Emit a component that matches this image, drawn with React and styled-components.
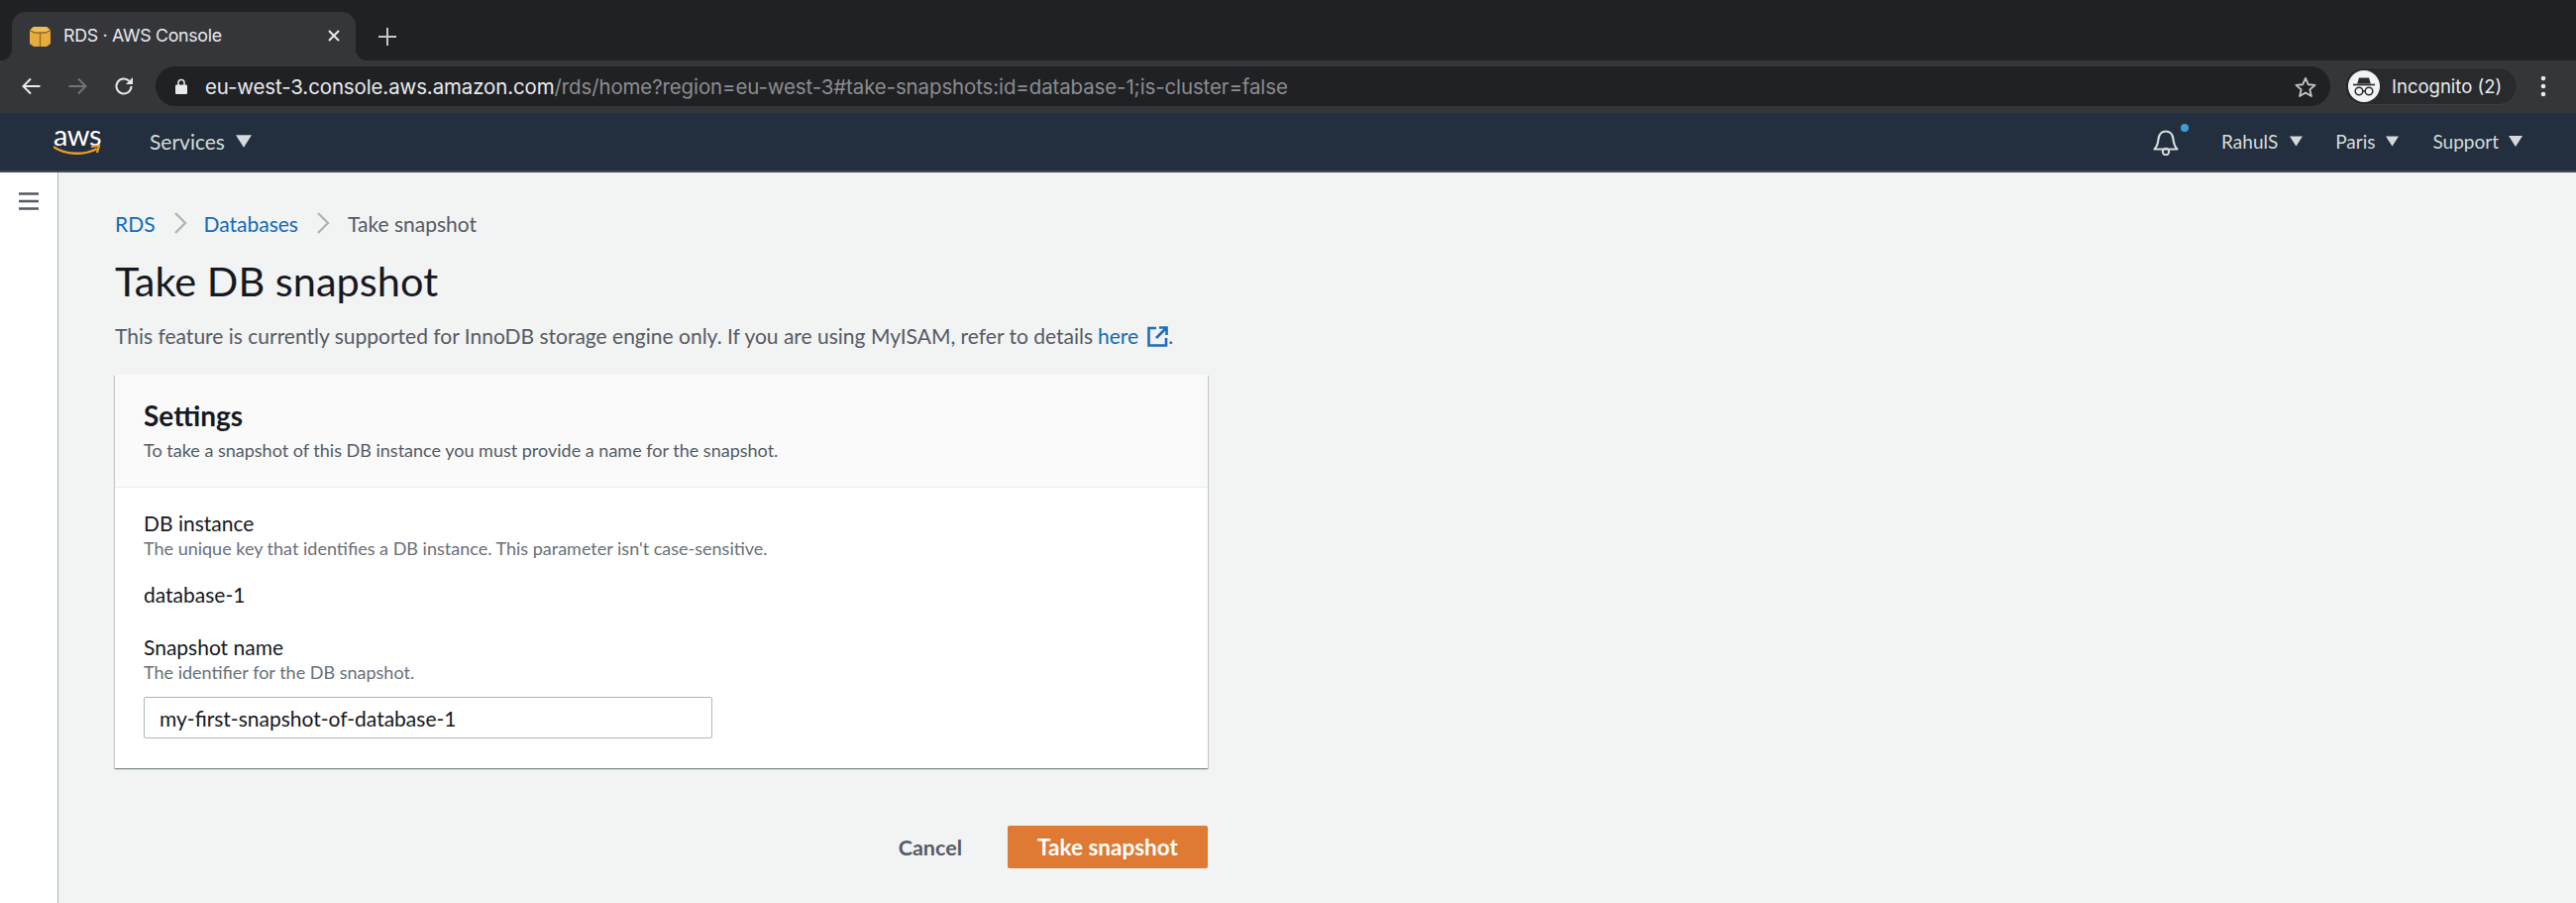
import React from "react";
import styled, { createGlobalStyle } from "styled-components";

const Global = createGlobalStyle`
  html, body { margin: 0; padding: 0; height: 100%; overflow: hidden; background: #f2f3f3; }
  #root { height: 100%; }
  * { box-sizing: border-box; }
`;
const UI = `"Inter", "Roboto", sans-serif`;
const EMBER = `"Lato", "Noto Sans", sans-serif`;

const Page = styled.div`display: flex; flex-direction: column; height: 911px; width: 2600px; overflow: hidden;`;

const TabStrip = styled.div`display: flex; align-items: flex-end; height: 61px; background: #202124; padding-left: 12px;`;
const Tab = styled.div`
  position: relative; display: flex; align-items: center; width: 347px; height: 49px; padding: 0 14px 0 18px;
  background: #35363a; border-radius: 14px 14px 0 0; color: #e8eaed; font: 400 17.800px ${UI}; letter-spacing: -0.3px;
  &::before, &::after { content: ""; position: absolute; bottom: 0; width: 12px; height: 12px; }
  &::before { left: -12px; background: radial-gradient(circle at 0 0, transparent 12px, #35363a 12.5px); }
  &::after { right: -12px; background: radial-gradient(circle at 100% 0, transparent 12px, #35363a 12.5px); }
`;
const TabTitle = styled.span`margin-left: 13px; flex: 1; padding-bottom: 2px;`;
const TabClose = styled.svg`margin-right: 1px; margin-bottom: 2px; display: block;`;
const NewTab = styled.svg`margin: 0 0 15px 23px; display: block;`;

const Toolbar = styled.div`display: flex; align-items: center; height: 53px; background: #35363a; padding: 0 0 1px 22px;`;
const NavIcon = styled.svg`display: block; flex: none; margin-right: ${p => p.$gap}px;`;
const Omnibox = styled.div`
  display: flex; align-items: center; width: 2195px; height: 40px; padding: 0 14px 0 20px;
  background: #202124; border-radius: 20px; font: 400 20.450px ${UI}; letter-spacing: -0.1px; white-space: nowrap;
`;
const UrlHost = styled.span`color: #e8eaed; margin-left: 18px;`;
const UrlPath = styled.span`color: #8b8d90; flex: 1;`;
const Incognito = styled.div`
  display: flex; align-items: center; width: 175px; height: 38px; margin-left: 14px; padding-left: 3px;
  background: #292a2d; border: 1px solid #3c3d41; border-radius: 19px; color: #e8eaed; font: 400 18.500px ${UI};
`;
const IncognitoBadge = styled.div`
  display: flex; align-items: center; justify-content: center; width: 32px; height: 32px; border-radius: 50%;
  background: #f1f3f4; margin-right: 12px; flex: none;
`;
const Kebab = styled.svg`display: block; margin-left: 23px;`;

const AwsNav = styled.div`
  display: flex; align-items: center; height: 60px; padding: 0 54px; background: #232f3e; border-bottom: 2px solid #3f4b5a;
  color: #d5dbdb; font: 400 19px ${EMBER};
`;
const AwsLogo = styled.div`position: relative; width: 47px; height: 34px; margin-right: 50px; flex: none;`;
const AwsWord = styled.span`position: absolute; left: 0; top: -7px; color: #fff; font: 400 29px "Lato", sans-serif; letter-spacing: -0.5px; line-height: 34px;`;
const AwsSmile = styled.svg`position: absolute; left: 0; top: 20px; display: block;`;
const NavSpacer = styled.div`flex: 1;`;
const NavItem = styled.div`display: flex; align-items: center; margin-left: ${p => p.$left}px; font-size: ${p => p.$size}px; padding-bottom: 2px;`;
const Caret = styled.svg`display: block; margin-left: ${p => p.$gap}px;`;
const BellWrap = styled.div`position: relative; width: 26px; height: 28px; margin-right: 43px;`;
const BellDot = styled.span`position: absolute; right: -10px; top: -4px; width: 8px; height: 8px; border-radius: 50%; background: #3c9fd1;`;

const Body = styled.div`display: flex; flex: 1; min-height: 0;`;
const Sidebar = styled.aside`width: 59px; background: #fff; border-right: 1px solid #aab7b8; padding: 20px 0 0 19px; flex: none;`;
const Main = styled.main`flex: 1; padding: 37px 0 0 57px; background: #f2f3f3;`;

const Crumbs = styled.nav`display: flex; align-items: center; height: 28px; font: 400 21px ${EMBER}; color: #545b64;`;
const CrumbLink = styled.a`color: #0f6cb9;`;
const CrumbSep = styled.svg`display: block; margin: 0 ${p => p.$r}px 0 ${p => p.$l}px;`;
const Title = styled.h1`margin: 19px 0 0; font: 400 41.500px/50px ${EMBER}; color: #16191f;`;
const Note = styled.p`margin: 17px 0 0; display: flex; align-items: center; font: 400 21px/28px ${EMBER}; color: #545b64; height: 28px;`;
const NoteLink = styled.a`color: #0f6cb9; margin-left: 5px;`;
const ExtIcon = styled.svg`display: block; margin-left: 9px;`;

const Card = styled.section`
  width: 1103px; margin-top: 25px; background: #fff; box-shadow: 0 1px 1px 0 rgba(0,28,36,.3), 1px 1px 1px 0 rgba(0,28,36,.15), -1px 1px 1px 0 rgba(0,28,36,.15);
`;
const CardHead = styled.header`height: 114px; padding: 24px 29px 0; background: #fafafa; border-bottom: 1px solid #eaeded;`;
const CardTitle = styled.h2`margin: 0; font: 700 28px/34px ${EMBER}; color: #16191f;`;
const Hint = styled.div`font: 400 18px/24px ${EMBER}; color: ${p => p.$muted ? "#687078" : "#545b64"};`;
const HeadHint = styled(Hint)`margin-top: 6px;`;
const CardBody = styled.div`padding: 22px 29px 0; height: 283px;`;
const Label = styled.div`font: 400 21px/27px ${EMBER}; color: #16191f;`;
const Value = styled.div`margin: 21px 0 25px; font: 400 21px/28px ${EMBER}; color: #16191f;`;
const Input = styled.input`
  display: block; width: 574px; height: 42px; margin-top: 13px; padding: 0 15px; background: #fff; border: 1px solid #aab7b8; border-radius: 2px;
  font: 400 21px ${EMBER}; color: #16191f; outline: none;
`;
const Actions = styled.div`display: flex; align-items: center; justify-content: flex-end; width: 1103px; margin-top: 58px;`;
const Ghost = styled.button`border: 0; background: none; padding: 0; font: 700 21.500px ${EMBER}; color: #545b64; margin-right: 46px;`;
const Primary = styled.button`width: 202px; height: 43px; border: 0; border-radius: 2px; background: #de7a33; color: #fff; font: 700 22.500px ${EMBER};`;

const Tri = ({ w, h, gap, color }) => (
  <Caret $gap={gap} width={w} height={h} viewBox="0 0 14 11"><path d="M0 0h14L7 11z" fill={color} /></Caret>
);
const Chevron = ({ l, r }) => (
  <CrumbSep $l={l} $r={r} width="14" height="22" viewBox="0 0 14 22"><path d="M2 1l10 10L2 21" fill="none" stroke="#aab7b8" strokeWidth="2.400" /></CrumbSep>
);

export default function App() {
  return (
    <Page>
      <Global />
      <TabStrip>
        <Tab>
          <svg width="21" height="21" viewBox="0 0 21 21" style={{ display: "block", flex: "none" }}>
            <path d="M4 1h13l4 3.500V18l-4 3H4l-4-3V4.500z" fill="#e8ac3b" />
            <path d="M4 1h13l4 3.500-5 2.500H5L0 4.500z" fill="#f0bd55" />
            <path d="M0 4.500L5 7h11l5-2.500M10.500 7v14" fill="none" stroke="#8f6a25" strokeWidth="1.300" />
          </svg>
          <TabTitle>RDS · AWS Console</TabTitle>
          <TabClose width="14" height="14" viewBox="0 0 14 14"><path d="M2 2l10 10M12 2L2 12" stroke="#e8eaed" strokeWidth="2" /></TabClose>
        </Tab>
        <NewTab width="18" height="18" viewBox="0 0 18 18"><path d="M9 0v18M0 9h18" stroke="#c4c7c9" strokeWidth="2" /></NewTab>
      </TabStrip>
      <Toolbar>
        <NavIcon $gap={28} width="19" height="18" viewBox="0 0 19 18"><path d="M18.500 9H2M9 1.500L1.500 9 9 16.500" fill="none" stroke="#e8eaed" strokeWidth="2" /></NavIcon>
        <NavIcon $gap={27} width="19" height="18" viewBox="0 0 19 18"><path d="M.5 9H17M10 1.500L17.500 9 10 16.500" fill="none" stroke="#737477" strokeWidth="2" /></NavIcon>
        <NavIcon $gap={22} width="20" height="20" viewBox="0 0 20 20"><path d="M17.500 10a7.500 7.500 0 1 1-2.200-5.300" fill="none" stroke="#e8eaed" strokeWidth="2" /><path d="M19 1v7h-7z" fill="#e8eaed" /></NavIcon>
        <Omnibox>
          <svg width="12" height="16" viewBox="0 0 12 16" style={{ display: "block", flex: "none" }}><path d="M3 7V4.500a3 3 0 0 1 6 0V7" fill="none" stroke="#e8eaed" strokeWidth="1.500" /><rect y="6.500" width="12" height="9.500" rx="1.200" fill="#e8eaed" /></svg>
          <UrlHost>eu-west-3.console.aws.amazon.com</UrlHost>
          <UrlPath>/rds/home?region=eu-west-3#take-snapshots:id=database-1;is-cluster=false</UrlPath>
          <svg width="22" height="21" viewBox="0 0 24 23" style={{ display: "block", flex: "none" }}><path d="M12 2l3 7 7.500.7-5.700 5 1.700 7.300-6.500-3.900L5.500 22l1.700-7.300-5.700-5L9 9z" fill="none" stroke="#c4c7c9" strokeWidth="2" strokeLinejoin="round" /></svg>
        </Omnibox>
        <Incognito>
          <IncognitoBadge>
            <svg width="24" height="21" viewBox="0 0 24 21">
              <path d="M7 1.500h10l1.800 6H5.200z" fill="#292a2d" />
              <path d="M1 8.500h22" stroke="#292a2d" strokeWidth="1.600" />
              <circle cx="7" cy="15" r="3.800" fill="none" stroke="#292a2d" strokeWidth="1.500" />
              <circle cx="17" cy="15" r="3.800" fill="none" stroke="#292a2d" strokeWidth="1.500" />
              <path d="M10.800 15h2.400" stroke="#292a2d" strokeWidth="1.500" />
            </svg>
          </IncognitoBadge>
          Incognito (2)
        </Incognito>
        <Kebab width="6" height="22" viewBox="0 0 6 22"><circle cx="3" cy="3" r="2.300" fill="#e8eaed" /><circle cx="3" cy="11" r="2.300" fill="#e8eaed" /><circle cx="3" cy="19" r="2.300" fill="#e8eaed" /></Kebab>
      </Toolbar>
      <AwsNav>
        <AwsLogo>
          <AwsWord>aws</AwsWord>
          <AwsSmile width="48" height="14" viewBox="0 0 48 14">
            <path d="M0.500 2.500C12 10 30 11 43 4.500" fill="none" stroke="#ec9b26" strokeWidth="2.400" strokeLinecap="round" />
            <path d="M38 2l8-1-2 7" fill="none" stroke="#ec9b26" strokeWidth="2.200" />
          </AwsSmile>
        </AwsLogo>
        <NavItem $left={0} $size={21}>Services<Tri w={16} h={13} gap={11} color="#d5dbdb" /></NavItem>
        <NavSpacer />
        <BellWrap>
          <svg width="26" height="28" viewBox="0 0 26 28" style={{ display: "block" }}>
            <path d="M1.500 21.500h23c-3-3-3.500-5.500-4-10-.5-5-3.500-8-7.500-8s-7 3-7.500 8c-.5 4.500-1 7-4 10z" fill="none" stroke="#d5dbdb" strokeWidth="2.200" strokeLinejoin="round" />
            <circle cx="13" cy="24" r="3.200" fill="none" stroke="#d5dbdb" strokeWidth="2" />
          </svg>
          <BellDot />
        </BellWrap>
        <NavItem $left={0} $size={19}>RahulS<Tri w={13} h={11} gap={12} color="#d5dbdb" /></NavItem>
        <NavItem $left={33} $size={19}>Paris<Tri w={13} h={11} gap={11} color="#d5dbdb" /></NavItem>
        <NavItem $left={34} $size={19}>Support<Tri w={14} h={11} gap={10} color="#d5dbdb" /></NavItem>
      </AwsNav>
      <Body>
        <Sidebar>
          <svg width="20" height="18" viewBox="0 0 20 18" style={{ display: "block" }}><path d="M0 1.500h20M0 9h20M0 16.500h20" stroke="#545b64" strokeWidth="2.600" /></svg>
        </Sidebar>
        <Main>
          <Crumbs>
            <CrumbLink>RDS</CrumbLink>
            <Chevron l={18} r={17} />
            <CrumbLink>Databases</CrumbLink>
            <Chevron l={18} r={18} />
            Take snapshot
          </Crumbs>
          <Title>Take DB snapshot</Title>
          <Note>
            This feature is currently supported for InnoDB storage engine only. If you are using MyISAM, refer to details
            <NoteLink>here</NoteLink>
            <ExtIcon width="21" height="21" viewBox="0 0 21 21"><path d="M9 2H1.500v17.500H19V12" fill="none" stroke="#1b6fb8" strokeWidth="2.600" /><path d="M12 1.500h7.500V9M19 2L9 12" fill="none" stroke="#1b6fb8" strokeWidth="2.600" /></ExtIcon>
            .
          </Note>
          <Card>
            <CardHead>
              <CardTitle>Settings</CardTitle>
              <HeadHint>To take a snapshot of this DB instance you must provide a name for the snapshot.</HeadHint>
            </CardHead>
            <CardBody>
              <Label>DB instance</Label>
              <Hint $muted>The unique key that identifies a DB instance. This parameter isn't case-sensitive.</Hint>
              <Value>database-1</Value>
              <Label>Snapshot name</Label>
              <Hint $muted>The identifier for the DB snapshot.</Hint>
              <Input readOnly value="my-first-snapshot-of-database-1" />
            </CardBody>
          </Card>
          <Actions>
            <Ghost>Cancel</Ghost>
            <Primary>Take snapshot</Primary>
          </Actions>
        </Main>
      </Body>
    </Page>
  );
}
